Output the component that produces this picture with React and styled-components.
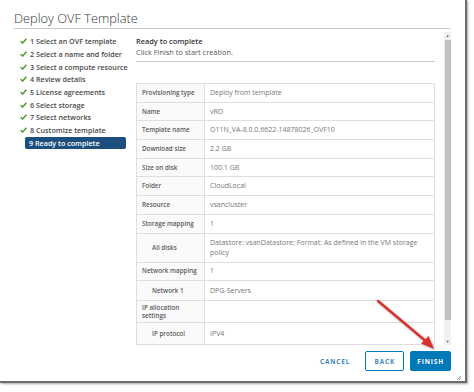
import React from "react";
import styled, { createGlobalStyle } from "styled-components";

const GlobalStyle = createGlobalStyle`
  html, body {
    margin: 0;
    padding: 0;
    background: #fff;
  }
  body {
    font-family: "Open Sans", "Liberation Sans", sans-serif;
  }
`;

const Page = styled.div`
  position: relative;
  width: 474px;
  height: 392px;
  overflow: hidden;
  background: #fff;
`;

const Dialog = styled.div`
  width: 467px;
  height: 383px;
  box-sizing: border-box;
  padding: 0 15px 0 14px;
  border-right: 2px solid #6d6d6d;
  border-bottom: 2px solid #6d6d6d;
  box-shadow: 1px 1px 2px rgba(0, 0, 0, 0.35);
  display: flex;
  flex-direction: column;
  background: #fff;
`;

const Title = styled.h1`
  margin: 0;
  height: 29px;
  box-sizing: border-box;
  padding-top: 9px;
  font-size: 12.8px;
  line-height: 18px;
  font-weight: 300;
  color: #333;
  border-bottom: 1px solid #c9c9c9;
`;

const Body = styled.div`
  flex: 1;
  display: grid;
  grid-template-columns: 122px 1fr;
  min-height: 0;
`;

const Steps = styled.ul`
  list-style: none;
  margin: 0;
  padding: 6px 0 0 5px;
`;

const Step = styled.li`
  display: flex;
  align-items: center;
  gap: 3px;
  height: 12.7px;
  font-size: 7.2px;
  font-weight: 600;
  color: ${(p) => (p.$active ? "#fff" : "#4a4a4a")};
  background: ${(p) => (p.$active ? "#1d4f7e" : "transparent")};
  border-radius: 2px;
  margin-left: ${(p) => (p.$active ? "6px" : "0")};
  padding-left: ${(p) => (p.$active ? "4px" : "0")};
  width: ${(p) => (p.$active ? "101px" : "auto")};
  box-sizing: border-box;
  white-space: nowrap;
`;

const CheckMark = styled.svg`
  margin-left: 1px;
  flex: none;
`;

const Check = () => (
  <CheckMark width="7" height="6" viewBox="0 0 7 6">
    <path d="M0.6 3.2 L2.6 5 L6.4 0.8" fill="none" stroke="#4c9a2a" strokeWidth="1.5" />
  </CheckMark>
);

const Main = styled.div`
  display: flex;
  flex-direction: column;
  min-height: 0;
`;

const ScrollRow = styled.div`
  height: 316px;
  display: flex;
  overflow: hidden;
`;

const ScrollContent = styled.div`
  width: 299px;
  padding-top: 7px;
  overflow: hidden;
`;

const Heading = styled.div`
  font-size: 7.4px;
  font-weight: 600;
  line-height: 11px;
  color: #333;
`;

const Sub = styled.div`
  font-size: 7.4px;
  line-height: 11px;
  color: #555;
  padding-bottom: 3px;
  border-bottom: 1px solid #c9c9c9;
  margin-bottom: 21px;
`;

const Table = styled.table`
  width: 299px;
  border-collapse: collapse;
  table-layout: fixed;
`;

const Row = styled.tr`
  height: ${(p) => p.$h || 18.7}px;
`;

const Label = styled.td`
  width: 68px;
  box-sizing: border-box;
  border: 1px solid #dedede;
  background: #fafafa;
  padding: 2px 4px 2px ${(p) => (p.$indent ? "15px" : "5px")};
  font-size: 6.3px;
  line-height: 8px;
  font-weight: 600;
  color: #5a5a5a;
  vertical-align: middle;
`;

const Value = styled.td`
  border: 1px solid #dedede;
  padding: 3px 5px;
  font-size: 7px;
  line-height: 10px;
  color: #777;
  vertical-align: middle;
`;

const Scrollbar = styled.div`
  margin-left: 9px;
  margin-top: 3px;
  width: 7px;
  display: flex;
  flex-direction: column;
  align-items: center;
  background: #f1f1f1;
`;

const Arrow = styled.div`
  height: 7px;
  display: flex;
  align-items: center;
  justify-content: center;
  font-size: 4px;
  color: #666;
`;

const Thumb = styled.div`
  width: 6px;
  height: 280px;
  background: #c1c1c1;
  margin-top: 1px;
`;

const Spacer = styled.div`
  flex: 1;
`;

const Footer = styled.div`
  display: flex;
  justify-content: flex-end;
  align-items: center;
  gap: 6px;
  padding-top: 6px;
`;

const Button = styled.button`
  height: 20px;
  min-width: ${(p) => (p.$variant === "flat" ? "36px" : "39px")};
  padding: 0 6px;
  box-sizing: border-box;
  border-radius: 2px;
  font-family: "Open Sans", "Liberation Sans", sans-serif;
  font-size: 6.4px;
  font-weight: 700;
  letter-spacing: 0.9px;
  cursor: pointer;
  border: 1px solid
    ${(p) => (p.$variant === "flat" ? "transparent" : "#0079b8")};
  background: ${(p) => (p.$variant === "primary" ? "#0079b8" : "#fff")};
  color: ${(p) => (p.$variant === "primary" ? "#fff" : "#3b8bbd")};
  margin-right: ${(p) => (p.$variant === "flat" ? "2px" : "0")};
`;

const Annotation = styled.svg`
  position: absolute;
  left: 0;
  top: 0;
  pointer-events: none;
`;

const steps = [
  "1 Select an OVF template",
  "2 Select a name and folder",
  "3 Select a compute resource",
  "4 Review details",
  "5 License agreements",
  "6 Select storage",
  "7 Select networks",
  "8 Customize template",
];

const rows = [
  ["Provisioning type", "Deploy from template"],
  ["Name", "vRO"],
  ["Template name", "O11N_VA-8.0.0.6622-14878026_OVF10"],
  ["Download size", "2.2 GB"],
  ["Size on disk", "100.1 GB"],
  ["Folder", "CloudLocal"],
  ["Resource", "vsancluster"],
  ["Storage mapping", "1"],
  ["All disks", "Datastore: vsanDatastore; Format: As defined in the VM storage policy", true, 29],
  ["Network mapping", "1"],
  ["Network 1", "DPG-Servers", true, 20],
  ["IP allocation settings", "", false, 22],
  ["IP protocol", "IPV4", true, 22],
  ["", "", true, 18.7],
];

export default function App() {
  return (
    <Page>
      <GlobalStyle />
      <Dialog>
        <Title>Deploy OVF Template</Title>
        <Body>
          <Steps>
            {steps.map((s) => (
              <Step key={s}>
                <Check />
                {s}
              </Step>
            ))}
            <Step $active>9 Ready to complete</Step>
          </Steps>
          <Main>
            <ScrollRow>
              <ScrollContent>
                <Heading>Ready to complete</Heading>
                <Sub>Click Finish to start creation.</Sub>
                <Table>
                  <tbody>
                    {rows.map(([k, v, indent, h], i) => (
                      <Row key={i} $h={h}>
                        <Label $indent={indent}>{k}</Label>
                        <Value>{v}</Value>
                      </Row>
                    ))}
                  </tbody>
                </Table>
              </ScrollContent>
              <Scrollbar>
                <Arrow>▲</Arrow>
                <Thumb />
                <Spacer />
                <Arrow>▼</Arrow>
              </Scrollbar>
            </ScrollRow>
            <Footer>
              <Button $variant="flat">CANCEL</Button>
              <Button $variant="outline">BACK</Button>
              <Button $variant="primary">FINISH</Button>
            </Footer>
          </Main>
        </Body>
      </Dialog>
      <Annotation width="474" height="392" viewBox="0 0 474 392">
        <defs>
          <filter id="sh" x="-20%" y="-20%" width="140%" height="140%">
            <feDropShadow dx="1" dy="1" stdDeviation="0.8" floodColor="#000" floodOpacity="0.35" />
          </filter>
        </defs>
        <g filter="url(#sh)">
          <line x1="378" y1="301" x2="428" y2="343" stroke="#d8312c" strokeWidth="2.4" strokeLinecap="round" />
          <path d="M434 349 L421 343.5 L428.5 336 Z" fill="#d8312c" />
        </g>
        <path d="M457 380 L461 376 M459 380 L461 378" stroke="#777" strokeWidth="0.8" />
      </Annotation>
    </Page>
  );
}
